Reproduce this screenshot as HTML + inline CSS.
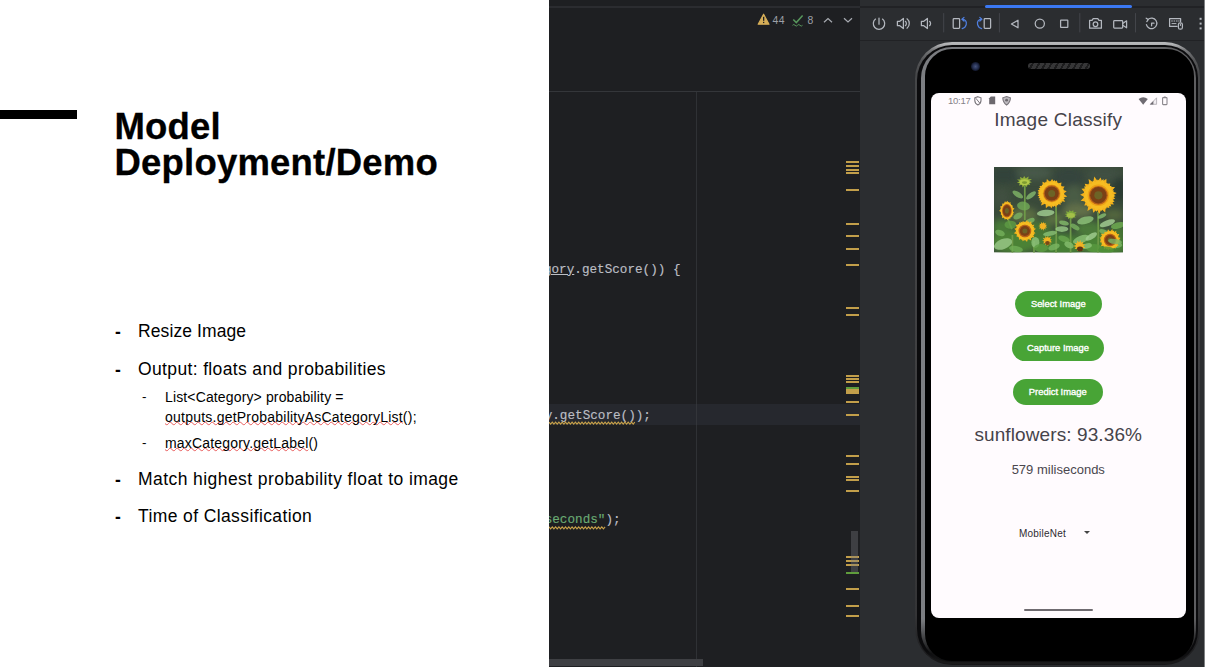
<!DOCTYPE html>
<html lang="en">
<head>
<meta charset="utf-8">
<title>Model Deployment/Demo</title>
<style>
*{box-sizing:border-box;margin:0;padding:0}
html,body{width:1205px;height:667px;overflow:hidden;background:#fff}
body{position:relative;font-family:"Liberation Sans",sans-serif;color:#000}
.abs{position:absolute}
/* ---------- slide (left) ---------- */
#bar{left:0;top:110px;width:77px;height:9px;background:#000}
#title{left:114.5px;top:108.5px;font-weight:bold;font-size:36.5px;line-height:36px;letter-spacing:.2px;white-space:nowrap;-webkit-text-stroke:.3px #000}
.b1{font-size:17.5px;line-height:20px;white-space:nowrap;letter-spacing:.3px}
.b2{font-size:14px;line-height:20px;white-space:nowrap;letter-spacing:.18px}
.dash1{font-size:17.5px;line-height:20px;font-weight:bold}
.dash2{font-size:13.5px;line-height:20px}
.sp{text-decoration:underline wavy #e85c5c;text-decoration-thickness:.7px;text-underline-offset:-1px;text-decoration-skip-ink:none}
/* ---------- IDE (right) ---------- */
#ide{left:549px;top:0;width:656px;height:667px;background:#1e1f22;overflow:hidden}
#ide .abs{position:absolute}
.code{font-family:"Liberation Mono",monospace;font-size:12.65px;line-height:21px;color:#bcbec4;white-space:pre;-webkit-text-stroke:.15px currentColor}
.mk{left:297px;width:13px;height:2px;background:#c29e4a}
.mkg{left:297px;width:13px;height:2px;background:#5f9c3c}
.sepv{width:1px;height:19px;top:13px;background:#43454a}
/* phone */
#phone{left:366.2px;top:42.0px;width:284.8px;height:623.0px;border-radius:37px 35px 35px 37px;background:linear-gradient(180deg,#babbbd 0,#b0b1b3 2.5px,#77787a 8px,#555658 18px,#454648 34px,#404042 50%,#343436 92%,#161618 100%)}
#ph2{left:367.9px;top:44.9px;width:280.8px;height:619.1px;border-radius:35px 33px 33px 35px;background:linear-gradient(180deg,#0b0b0d 0,#0b0b0d 98%,#1c1c1c 100%)}
#ph3{left:371.6px;top:47.0px;width:275.5px;height:614.8px;border-radius:31px 31px 31px 31px;background:linear-gradient(180deg,rgba(8,8,9,0) 0,rgba(8,8,9,0) 93%,rgba(8,8,9,.92) 98.6%),linear-gradient(90deg,#7c7e82 0,#7a7c80 6%,#6a6b6e 50%,#5e5e60 100%)}
#phblack{left:375.5px;top:49.1px;width:269.4px;height:612.3px;border-radius:27px;background:#000}
#screen{left:382px;top:93px;width:254.5px;height:524.6px;border-radius:8px;background:#fffbfe;overflow:hidden;color:#49454f}
#screen .abs{position:absolute}
.ctr{left:0;width:254.5px;text-align:center;white-space:nowrap}
.btn{background:#48a436;border-radius:13px;height:26px;color:#fff;font-size:9.4px;line-height:26px;text-align:center;-webkit-text-stroke:.35px #fff;white-space:nowrap}
</style>
</head>
<body>

<!-- ================= SLIDE ================= -->
<div class="abs" id="bar"></div>
<div class="abs" id="title">Model<br>Deployment/Demo</div>

<div class="abs dash1" style="left:115px;top:322px">-</div>
<div class="abs b1" style="left:138px;top:321px;letter-spacing:.1px">Resize Image</div>

<div class="abs dash1" style="left:115px;top:360px">-</div>
<div class="abs b1" style="left:138px;top:359px;letter-spacing:.36px">Output: floats and probabilities</div>

<div class="abs dash2" style="left:142px;top:386.8px">-</div>
<div class="abs b2" style="left:165px;top:386.8px;letter-spacing:.14px">List&lt;Category&gt; probability =</div>
<div class="abs b2" style="left:165px;top:406.8px;letter-spacing:.23px"><span class="sp">outputs.getProbabilityAsCategoryList</span>();</div>

<div class="abs dash2" style="left:142px;top:432.8px">-</div>
<div class="abs b2" style="left:165px;top:432.8px"><span class="sp">maxCategory.getLabel</span>()</div>

<div class="abs dash1" style="left:115px;top:470px">-</div>
<div class="abs b1" style="left:138px;top:469px;letter-spacing:.43px">Match highest probability float to image</div>

<div class="abs dash1" style="left:115px;top:507px">-</div>
<div class="abs b1" style="left:138px;top:505.5px;letter-spacing:.39px">Time of Classification</div>

<!-- ================= IDE SCREENSHOT ================= -->
<div class="abs" id="ide">
  <!-- editor chrome -->
  <div class="abs" style="left:0;top:6.3px;width:311px;height:1.6px;background:#2b2c30"></div>
  <div class="abs" style="left:0;top:91px;width:311px;height:1px;background:#34363a"></div>
  <div class="abs" style="left:147px;top:92px;width:1px;height:575px;background:#2f3135"></div>
  <!-- current line -->
  <div class="abs" style="left:0;top:404px;width:311px;height:21px;background:#26282e"></div>
  <div class="abs" style="left:147px;top:404px;width:1px;height:21px;background:#33353a"></div>

  <!-- code -->
  <div class="abs code" style="left:-5.06px;top:258.8px"><u>gory</u>.getScore()) {</div>
  <div class="abs code" style="left:-4.3px;top:405.1px">y.getScore());</div>
  <div class="abs code" style="left:-4.3px;top:509.4px"><span style="color:#6aab73">seconds"</span>);</div>

  <!-- warning squiggles -->
  <svg class="abs" style="left:0;top:0" width="160" height="667" viewBox="0 0 160 667" fill="none" stroke="#c9a24a" stroke-width="1.1"><polyline points="0.0,422.2 1.6,424.2 3.3,422.2 4.9,424.2 6.6,422.2 8.2,424.2 9.9,422.2 11.6,424.2 13.2,422.2 14.9,424.2 16.5,422.2 18.1,424.2 19.8,422.2 21.4,424.2 23.1,422.2 24.7,424.2 26.4,422.2 28.0,424.2 29.7,422.2 31.3,424.2 33.0,422.2 34.6,424.2 36.3,422.2 37.9,424.2 39.6,422.2 41.2,424.2 42.9,422.2 44.5,424.2 46.2,422.2 47.8,424.2 49.5,422.2 51.1,424.2 52.8,422.2 54.4,424.2 56.1,422.2 57.7,424.2 59.4,422.2 61.0,424.2 62.7,422.2 64.3,424.2 66.0,422.2 67.6,424.2 69.3,422.2 70.9,424.2 72.6,422.2 74.2,424.2 75.9,422.2 77.6,424.2 79.2,422.2 80.9,424.2 82.5,422.2 84.2,424.2 85.8,422.2"/><polyline points="0.0,526.8 1.6,528.8 3.3,526.8 4.9,528.8 6.6,526.8 8.2,528.8 9.9,526.8 11.6,528.8 13.2,526.8 14.9,528.8 16.5,526.8 18.1,528.8 19.8,526.8 21.4,528.8 23.1,526.8 24.7,528.8 26.4,526.8 28.0,528.8 29.7,526.8 31.3,528.8 33.0,526.8 34.6,528.8 36.3,526.8 37.9,528.8 39.6,526.8 41.2,528.8 42.9,526.8 44.5,528.8 46.2,526.8 47.8,528.8 49.5,526.8 51.1,528.8 52.8,526.8 54.4,528.8 56.1,526.8"/></svg>
  <!-- error stripe -->
  <div class="abs mk" style="top:160.9px"></div><div class="abs mk" style="top:164.7px"></div><div class="abs mk" style="top:168.5px"></div><div class="abs mk" style="top:172.2px"></div><div class="abs mk" style="top:188.5px"></div><div class="abs mk" style="top:222.5px"></div><div class="abs mk" style="top:234.9px"></div><div class="abs mk" style="top:248.2px"></div><div class="abs mk" style="top:264.4px"></div><div class="abs mk" style="top:307.1px"></div><div class="abs mk" style="top:313.9px"></div><div class="abs mk" style="top:374.7px"></div><div class="abs mk" style="top:377.8px"></div><div class="abs mk" style="top:380.8px"></div><div class="abs mk" style="top:400.9px"></div><div class="abs mk" style="top:414.1px"></div><div class="abs mk" style="top:454.7px"></div><div class="abs mk" style="top:463.1px"></div><div class="abs mk" style="top:475.6px"></div><div class="abs mk" style="top:479.4px"></div><div class="abs mk" style="top:489.9px"></div><div class="abs mk" style="top:556.3px"></div><div class="abs mk" style="top:560.0px"></div><div class="abs mk" style="top:563.8px"></div><div class="abs mk" style="top:587.5px"></div><div class="abs mk" style="top:604.5px"></div><div class="abs mk" style="top:614.8px"></div><div class="abs mk" style="top:387px;height:6.5px"></div><div class="abs mkg" style="top:387px;height:1.6px"></div><div class="abs" style="left:301.5px;top:530.5px;width:7.5px;height:42px;background:rgba(120,122,128,.36)"></div><div class="abs mkg" style="top:572.3px"></div>

  <!-- inspections widget -->
  <svg class="abs" style="left:208px;top:13px" width="100" height="14" viewBox="0 0 100 14">
    <path d="M6.6 1.2 L12 11.2 H1.2 Z" fill="#d6ae58" stroke="#d6ae58" stroke-width="1.2" stroke-linejoin="round"/>
    <rect x="6" y="3.8" width="1.3" height="4" fill="#1e1f22"/><rect x="6" y="8.8" width="1.3" height="1.3" fill="#1e1f22"/>
    <text x="15.6" y="11" font-family="Liberation Sans,sans-serif" font-size="10.4" fill="#9da0a8" letter-spacing=".5">44</text>
    <path d="M36.3 6.5 L39.3 9.6 L45.6 2.4" fill="none" stroke="#57965c" stroke-width="1.5"/>
    <path d="M35.5 12.3 q1.25 -1.6 2.5 0 t2.5 0 t2.5 0 t2.5 0" fill="none" stroke="#57965c" stroke-width="1"/>
    <text x="50.6" y="11" font-family="Liberation Sans,sans-serif" font-size="10.4" fill="#9da0a8">8</text>
    <path d="M67 9.3 L71 5.5 L75 9.3" fill="none" stroke="#a8abb2" stroke-width="1.2"/>
    <path d="M87 5.2 L91 9 L95 5.2" fill="none" stroke="#a8abb2" stroke-width="1.2"/>
  </svg>

  <!-- ============ emulator tool window ============ -->
  <div class="abs" id="emu" style="left:311px;top:0;width:345px;height:667px;background:#2b2d30"></div>
  <div class="abs" style="left:311px;top:6.3px;width:345px;height:1.5px;background:#212225"></div>
  <div class="abs" style="left:311px;top:39.5px;width:345px;height:1.4px;background:#212225"></div>
  <div class="abs" style="left:436px;top:4.5px;width:146.5px;height:3.2px;background:#3b78f2;border-radius:1.5px"></div>

  <!-- toolbar icons (ide-relative coords: page x - 549) -->
  <svg class="abs" style="left:311px;top:8px" width="344" height="32" viewBox="860 8 344 32" fill="none" stroke="#b4b8bf" stroke-width="1.25" stroke-linecap="round" stroke-linejoin="round">
    <!-- power -->
    <path d="M875.5 19.1 A5.7 5.7 0 1 0 882.5 19.1"/><path d="M879 18 V24.2"/>
    <!-- volume up -->
    <path d="M897.4 21.3 H899.8 L903.4 18.4 V28.6 L899.8 25.7 H897.4 Z"/>
    <path d="M905.4 21.3 A3 3 0 0 1 905.4 25.7"/><path d="M907 18.8 A6 6 0 0 1 907 28.2"/>
    <!-- volume down -->
    <path d="M921.4 21.3 H923.8 L927.4 18.4 V28.6 L923.8 25.7 H921.4 Z"/>
    <path d="M929.6 21.3 A3 3 0 0 1 929.6 25.7"/>
    <!-- sep -->
    <path d="M943.7 13.5 V32" stroke="#43454a" stroke-width="1"/>
    <!-- rotate left -->
    <rect x="953.2" y="18.6" width="6.4" height="9.8" rx=".8"/>
    <path d="M962.2 19.2 Q967.2 19.8 966.2 24.6 Q965.4 27.8 962.2 28.6" stroke="#4f7fe0"/>
    <path d="M964 17.4 L962 19.2 L964 21" stroke="#4f7fe0"/>
    <!-- rotate right -->
    <rect x="984.2" y="18.6" width="6.4" height="9.8" rx=".8"/>
    <path d="M981.6 19.2 Q976.6 19.8 977.6 24.6 Q978.4 27.8 981.6 28.6" stroke="#4f7fe0"/>
    <path d="M979.8 17.4 L981.8 19.2 L979.8 21" stroke="#4f7fe0"/>
    <!-- sep -->
    <path d="M999.4 13.5 V32" stroke="#43454a" stroke-width="1"/>
    <!-- back / home / overview -->
    <path d="M1018 20.2 V27.8 L1011.4 24 Z"/>
    <circle cx="1039.8" cy="23.6" r="4.6"/>
    <rect x="1060.6" y="20.2" width="7.2" height="7.2" rx=".4"/>
    <!-- sep -->
    <path d="M1079.8 13.5 V32" stroke="#43454a" stroke-width="1"/>
    <!-- camera -->
    <path d="M1089.6 20.4 H1092 L1093.2 18.6 H1097.8 L1099 20.4 H1101.4 V28.2 H1089.6 Z"/>
    <circle cx="1095.5" cy="24.2" r="2.3"/>
    <!-- video -->
    <rect x="1113.7" y="20.6" width="9" height="7.4" rx=".8"/>
    <path d="M1122.7 23.4 L1126.6 20.8 V27.8 L1122.7 25.2"/>
    <!-- sep -->
    <path d="M1135.5 13.5 V32" stroke="#43454a" stroke-width="1"/>
    <!-- snapshot / history -->
    <path d="M1148 19.4 A5.3 5.3 0 1 1 1146.4 24.6"/>
    <path d="M1146.2 18.2 L1148.2 19.6 L1146.8 21.6"/>
    <path d="M1151.6 25.8 V23.2 H1154"/>
    <!-- keyboard + mouse -->
    <path d="M1177 26.4 H1169.6 V18.6 H1180.6 V21.6"/>
    <path d="M1171.6 21 H1172.4 M1174 21 H1174.8 M1176.4 21 H1177.2 M1178.6 21 H1179.2 M1172 23.6 H1176" stroke-width="1"/>
    <rect x="1178.4" y="22.8" width="4" height="6.4" rx="1.8" fill="#2b2d30"/>
    <path d="M1180.4 24.2 V25.6" stroke-width="1"/>
    <!-- more -->
    <g fill="#b4b8bf" stroke="none"><rect x="1199.6" y="17.8" width="2" height="2"/><rect x="1199.6" y="22.6" width="2" height="2"/><rect x="1199.6" y="27.4" width="2" height="2"/></g>
  </svg>

  <!-- phone -->
  <div class="abs" id="phone"></div><div class="abs" id="ph2"></div><div class="abs" id="ph3"></div>
  <div class="abs" id="phblack"></div>
  <!-- camera + earpiece -->
  <div class="abs" style="left:422px;top:61.5px;width:9px;height:9px;border-radius:50%;background:radial-gradient(circle,#46527a 0,#2a3558 35%,#141a30 65%,#05060a 100%)"></div>
  <div class="abs" style="left:479px;top:62.6px;width:62px;height:6.4px;border-radius:3.2px;background:repeating-linear-gradient(120deg,#363637 0 3.4px,#1c1c1d 3.4px 5.4px)"></div>

  <div class="abs" id="screen">
    <!-- status bar (screen-relative: page x - 931, page y - 93) -->
    <div class="abs" style="left:17px;top:1.5px;font-size:9.5px;line-height:12px;color:#858288;letter-spacing:-.25px">10:17</div>
    <svg class="abs" style="left:42px;top:3px" width="40" height="10" viewBox="0 0 40 10" fill="#6c686e">
      <path d="M4.9 .7 L8 1.8 V4.6 Q8 7.6 4.9 9 Q1.8 7.6 1.8 4.6 V1.8 Z" fill="none" stroke="#7a767c" stroke-width="1.1"/>
      <path d="M2.8 2.2 L6.8 7.2" stroke="#7a767c" stroke-width="1"/>
      <path d="M17.8 .4 H22.2 V8.3 H16.2 V2.2 Z"/>
      <path d="M33.6 .6 L37.4 1.8 Q37.4 6.4 33.6 9 Q29.8 6.4 29.8 1.8 Z" fill="#bdb9bf" stroke="#7a767c" stroke-width="1.1"/>
      <circle cx="33.6" cy="4.2" r="1.4"/>
    </svg>
    <svg class="abs" style="left:207px;top:2.5px" width="32" height="10" viewBox="0 0 32 10" fill="#6f6b72">
      <path d="M0.6 3 Q5.2 -.6 9.8 3 L5.2 8.8 Z"/>
      <path d="M18.6 1.8 V8.3 H12.4 Z" fill="#f1edf1" stroke="#aaa6ac" stroke-width=".8"/><path d="M15.4 5 V8.6 H11.8 Z"/>
      <rect x="24.6" y="1.6" width="4.4" height="7" rx=".6" fill="none" stroke="#8b878d" stroke-width="1.1"/><rect x="25.8" y=".5" width="2" height="1.2" fill="#8b878d"/>
    </svg>

    <div class="abs ctr" style="top:15px;font-size:19px;line-height:24px;letter-spacing:.25px;color:#46434a">Image Classify</div>

    <!-- sunflower picture placeholder: replaced below -->
    <!--PIC--><svg class="abs" id="pic" style="left:62.5px;top:74px" width="129.5" height="85.5" viewBox="0 0 129.5 85.5" aria-label="sunflowers">
<defs><filter id="bl" x="-20%" y="-20%" width="140%" height="140%"><feGaussianBlur stdDeviation="3.2"/></filter><filter id="b1" x="-10%" y="-10%" width="120%" height="120%"><feGaussianBlur stdDeviation=".5"/></filter><clipPath id="pc"><rect width="129.5" height="85.5"/></clipPath></defs>
<g clip-path="url(#pc)">
<rect width="129.5" height="85.5" fill="#3a4a3a"/>
<g filter="url(#bl)">
<ellipse cx="10" cy="8" rx="16" ry="8" fill="#33433a"/>
<ellipse cx="40" cy="6" rx="18" ry="7" fill="#47584a"/>
<ellipse cx="75" cy="10" rx="16" ry="9" fill="#34443c"/>
<ellipse cx="110" cy="8" rx="18" ry="8" fill="#3f5042"/>
<ellipse cx="126" cy="22" rx="8" ry="12" fill="#2c3a30"/>
<ellipse cx="80" cy="30" rx="10" ry="12" fill="#4a5b44"/>
<ellipse cx="30" cy="48" rx="14" ry="8" fill="#5a6c42"/>
<ellipse cx="84" cy="44" rx="16" ry="7" fill="#62704a"/>
<ellipse cx="120" cy="48" rx="10" ry="6" fill="#52663e"/>
<ellipse cx="60" cy="52" rx="10" ry="6" fill="#5a6e42"/>
<ellipse cx="8" cy="30" rx="8" ry="10" fill="#3f5040"/>
<ellipse cx="20" cy="75" rx="24" ry="12" fill="#4b8236"/>
<ellipse cx="65" cy="78" rx="26" ry="12" fill="#478034"/>
<ellipse cx="110" cy="78" rx="24" ry="12" fill="#4a8336"/>
<ellipse cx="45" cy="62" rx="12" ry="8" fill="#477636"/>
<ellipse cx="95" cy="62" rx="14" ry="8" fill="#4c7a3a"/>
<ellipse cx="8" cy="60" rx="10" ry="8" fill="#4a7a38"/>
<ellipse cx="125" cy="66" rx="8" ry="8" fill="#467636"/>
</g>
<g filter="url(#b1)">
<path d="M30.8 19 V53" stroke="#6e9a48" stroke-width="1.7" fill="none"/>
<path d="M62 40 Q62.6 60 62 86" stroke="#6e9a48" stroke-width="1.7" fill="none"/>
<path d="M76.6 51 V86" stroke="#6e9a48" stroke-width="1.7" fill="none"/>
<path d="M104 45 Q104.6 65 104 86" stroke="#6e9a48" stroke-width="1.7" fill="none"/>
<path d="M18.4 68 V86" stroke="#6e9a48" stroke-width="1.7" fill="none"/>
<path d="M40 74 V86" stroke="#6e9a48" stroke-width="1.7" fill="none"/>
<path d="M14 52 Q16 58 18 62" stroke="#6e9a48" stroke-width="1.7" fill="none"/>
<ellipse cx="51.7" cy="46" rx="8.8" ry="3.2" fill="#a3cf92" opacity=".8" transform="rotate(-5 51.7 46)"/>
<ellipse cx="23.8" cy="27.5" rx="6" ry="2.6" fill="#7fb567" opacity=".8" transform="rotate(32 23.8 27.5)"/>
<ellipse cx="37" cy="28.4" rx="6" ry="2.4" fill="#86ba6e" opacity=".8" transform="rotate(-38 37 28.4)"/>
<ellipse cx="29.5" cy="39" rx="6.5" ry="4.4" fill="#6fa955" opacity=".8" transform="rotate(10 29.5 39)"/>
<ellipse cx="91.4" cy="53.3" rx="8.5" ry="3.6" fill="#8ec47a" opacity=".8" transform="rotate(-15 91.4 53.3)"/>
<ellipse cx="113.4" cy="56.3" rx="8" ry="3" fill="#a6d296" opacity=".8" transform="rotate(-20 113.4 56.3)"/>
<ellipse cx="123.7" cy="58.5" rx="7" ry="3.2" fill="#6fae52" opacity=".8" transform="rotate(-15 123.7 58.5)"/>
<ellipse cx="9.1" cy="77" rx="9.5" ry="5" fill="#9ccb8b" opacity=".8" transform="rotate(-22 9.1 77)"/>
<ellipse cx="16.5" cy="57.7" rx="6" ry="4" fill="#5f9c44" opacity=".8" transform="rotate(0 16.5 57.7)"/>
<ellipse cx="87" cy="72.4" rx="8.5" ry="3.8" fill="#8cc377" opacity=".8" transform="rotate(-22 87 72.4)"/>
<ellipse cx="119.3" cy="77.5" rx="9" ry="3.5" fill="#7db565" opacity=".8" transform="rotate(5 119.3 77.5)"/>
<ellipse cx="41.4" cy="75.4" rx="4" ry="5.5" fill="#8fc47c" opacity=".8" transform="rotate(0 41.4 75.4)"/>
<ellipse cx="67.9" cy="62.1" rx="6.5" ry="2.8" fill="#9acb88" opacity=".8" transform="rotate(0 67.9 62.1)"/>
<ellipse cx="97.3" cy="69.5" rx="6.5" ry="2.8" fill="#a2cf92" opacity=".8" transform="rotate(-32 97.3 69.5)"/>
<ellipse cx="56" cy="66.5" rx="7" ry="2.4" fill="#8abf74" opacity=".8" transform="rotate(-10 56 66.5)"/>
<ellipse cx="70" cy="72" rx="6" ry="3" fill="#6aa650" opacity=".8" transform="rotate(20 70 72)"/>
<ellipse cx="47" cy="81" rx="7" ry="4" fill="#5c9c42" opacity=".8" transform="rotate(0 47 81)"/>
<ellipse cx="100" cy="81" rx="8" ry="4" fill="#58983e" opacity=".8" transform="rotate(0 100 81)"/>
<ellipse cx="60" cy="80" rx="6" ry="3" fill="#7ab562" opacity=".8" transform="rotate(-20 60 80)"/>
<ellipse cx="75" cy="78" rx="5" ry="3" fill="#86be6e" opacity=".8" transform="rotate(25 75 78)"/>
<ellipse cx="22" cy="82" rx="7" ry="3" fill="#6fae55" opacity=".8" transform="rotate(10 22 82)"/>
<ellipse cx="93" cy="79" rx="5" ry="2.6" fill="#8cc476" opacity=".8" transform="rotate(-15 93 79)"/>
<ellipse cx="110" cy="65" rx="5" ry="2.4" fill="#7cb663" opacity=".8" transform="rotate(20 110 65)"/>
<ellipse cx="36" cy="54" rx="5" ry="2.4" fill="#7db765" opacity=".8" transform="rotate(-25 36 54)"/>
<ellipse cx="70" cy="56" rx="5" ry="2.2" fill="#84bc6c" opacity=".8" transform="rotate(15 70 56)"/>
<ellipse cx="6" cy="66" rx="5" ry="3" fill="#74b05a" opacity=".8" transform="rotate(20 6 66)"/>
<ellipse cx="24" cy="49" rx="5" ry="3" fill="#7ab262" opacity=".8" transform="rotate(-30 24 49)"/>
<ellipse cx="81" cy="60" rx="5" ry="2.4" fill="#79b260" opacity=".8" transform="rotate(30 81 60)"/>
<ellipse cx="108" cy="49" rx="4.5" ry="2" fill="#86bd6f" opacity=".8" transform="rotate(-25 108 49)"/>
<polygon points="53.2,60.4 51.2,60.6 51.7,62.4 50.0,61.6 49.5,63.8 48.5,61.8 47.1,63.0 47.1,61.2 45.0,61.5 46.2,59.8 44.4,59.0 46.3,58.3 45.3,56.7 47.1,57.0 47.0,54.9 48.5,56.4 49.6,54.9 50.1,56.6 51.9,55.7 51.2,57.6 53.0,58.0 51.7,59.1" fill="#f1b324"/>
<polygon points="57.9,75.2 55.9,75.5 56.6,77.7 54.6,76.7 54.0,79.2 52.8,76.9 51.2,78.2 51.2,76.1 49.1,76.4 50.3,74.6 48.0,73.7 50.3,72.9 48.7,70.7 51.3,71.4 51.2,69.0 52.9,70.7 54.1,68.7 54.6,71.0 57.0,69.6 55.9,72.2 57.9,72.5 56.4,73.8" fill="#f1b324"/>
<polygon points="91.6,80.9 88.5,81.0 89.2,83.4 86.9,82.3 86.2,84.6 84.9,82.6 83.1,84.1 83.1,81.7 80.6,82.1 82.0,80.0 79.2,78.9 82.1,77.9 80.8,75.9 83.2,76.2 83.1,73.4 85.0,75.4 86.5,72.9 87.0,75.7 89.4,74.6 88.6,77.1 91.3,77.4 89.1,79.1" fill="#f1b324"/>
<ellipse cx="86" cy="82" rx="3" ry="2.4" fill="#5c3313"/>
<ellipse cx="53.5" cy="76" rx="2.4" ry="2" fill="#7a4a18"/>
<polygon points="37.9,15.2 35.1,16.1 36.3,18.0 33.4,17.6 33.0,19.9 30.7,18.3 28.5,20.5 28.0,17.8 24.8,18.6 26.0,16.3 22.9,15.7 25.5,14.3 23.0,12.5 26.6,12.5 25.9,10.0 28.9,11.3 30.2,9.1 31.7,11.2 34.7,9.5 34.1,12.2 37.9,12.0 35.4,14.0" fill="#8fae3a"/>
<ellipse cx="30.5" cy="15.2" rx="5" ry="3" fill="#b3c94a"/>
<ellipse cx="30.5" cy="15.6" rx="2.6" ry="1.4" fill="#7d9a30"/>
<polygon points="82.9,48.1 80.5,48.8 81.6,50.8 78.8,50.2 78.2,52.3 76.4,50.6 74.1,52.3 74.1,49.8 71.1,50.1 72.9,48.2 70.6,47.1 73.1,46.4 71.7,44.2 74.8,45.0 75.5,43.2 77.2,44.6 79.3,43.3 79.5,45.4 82.6,45.1 80.7,47.0" fill="#7faa3c"/>
<ellipse cx="76.8" cy="48.4" rx="4" ry="2.4" fill="#a4c04a"/>
<polygon points="121.1,31.7 117.5,33.3 119.9,37.4 115.2,37.3 115.3,41.0 111.7,40.3 111.2,45.5 107.4,42.0 105.3,47.0 102.8,42.2 99.3,45.8 98.3,41.0 93.4,43.9 94.5,38.3 90.3,38.5 91.8,34.6 86.6,33.7 90.5,30.1 86.1,27.7 90.6,25.5 87.4,21.8 92.3,21.2 90.7,16.8 95.3,17.6 94.6,12.1 99.2,15.3 100.3,9.5 103.7,14.3 106.5,10.5 108.3,14.8 112.4,11.7 112.5,16.8 116.2,16.4 115.8,20.1 121.0,20.0 117.8,24.2 122.7,25.9 118.4,28.8" fill="#f3b21c"/>
<polygon points="120.6,34.8 115.8,35.2 117.3,39.4 112.9,38.5 112.3,41.8 109.1,40.7 107.5,43.9 104.8,41.6 102.2,44.8 100.5,41.0 97.7,41.7 96.6,39.1 92.9,39.6 93.5,36.0 90.6,34.9 91.6,32.0 89.3,30.1 91.1,27.6 89.7,25.1 92.0,23.4 90.0,19.5 94.3,19.6 94.6,16.6 97.7,16.8 98.9,13.8 101.8,15.2 103.9,12.4 106.2,15.1 109.4,11.9 110.3,16.4 113.3,16.1 113.9,19.0 117.6,19.1 116.4,22.5 120.1,23.8 117.6,26.8 121.6,29.1 117.4,31.1" fill="#f6bd24"/>
<ellipse cx="104.4" cy="28.3" rx="10.8" ry="10.8" fill="#eda416"/>
<ellipse cx="104.4" cy="28.3" rx="9.4" ry="9.4" fill="#b8611a"/>
<ellipse cx="104.4" cy="28.3" rx="8.2" ry="8.2" fill="#7a3f16"/>
<ellipse cx="104.4" cy="28.3" rx="4.1" ry="4.1" fill="#6d6426"/>
<polygon points="73.2,29.6 68.6,30.8 71.2,34.8 66.5,34.2 66.7,37.8 63.3,36.8 62.4,40.5 59.4,38.1 57.3,41.2 55.4,38.0 51.9,41.3 51.6,36.5 47.0,38.6 48.5,33.8 45.3,33.3 46.6,30.2 43.6,28.6 46.0,26.2 43.6,23.6 46.8,22.2 45.5,19.0 48.9,18.8 48.4,14.8 52.1,16.2 52.9,12.1 56.0,14.9 58.1,12.1 60.0,15.0 62.8,13.6 63.8,16.5 67.5,15.4 66.9,19.2 70.6,19.5 68.8,22.8 72.7,24.2 69.4,26.8" fill="#f3b21c"/>
<polygon points="71.1,31.9 67.1,32.3 68.1,35.8 64.6,35.2 64.1,38.4 61.2,37.0 59.7,40.1 57.4,37.6 54.9,40.1 53.6,36.8 51.1,37.2 50.3,34.8 46.4,35.4 47.9,31.8 44.3,30.9 46.7,28.1 43.4,26.1 46.8,24.2 44.6,21.3 48.3,20.7 47.8,17.7 50.8,17.8 51.4,14.8 54.2,16.0 55.9,14.0 58.0,15.4 60.5,13.0 61.8,16.2 64.3,15.8 65.1,18.2 67.6,18.7 67.5,21.2 69.9,22.5 68.7,24.9 70.5,26.9 68.6,28.8" fill="#f6bd24"/>
<ellipse cx="57.7" cy="26.5" rx="9.0" ry="9.0" fill="#eda416"/>
<ellipse cx="57.7" cy="26.5" rx="8.2" ry="8.2" fill="#b8611a"/>
<ellipse cx="57.7" cy="26.5" rx="7.0" ry="7.0" fill="#7a3f16"/>
<ellipse cx="57.7" cy="26.5" rx="3.5" ry="3.5" fill="#6d6426"/>
<polygon points="19.9,45.7 18.2,46.9 18.5,49.2 16.8,49.6 16.3,51.8 14.7,51.2 13.7,53.3 12.4,51.6 10.8,52.8 10.1,50.6 8.1,51.2 8.3,48.4 6.7,47.6 7.3,45.4 5.1,43.8 7.3,42.1 6.0,39.6 8.2,39.1 8.2,36.6 10.0,36.8 10.7,34.4 12.2,35.8 13.6,33.8 14.6,36.1 16.4,35.0 16.7,37.7 18.4,38.0 18.1,40.4 20.5,41.4 18.6,43.6" fill="#f3b21c"/>
<polygon points="19.5,47.4 17.4,47.9 17.5,50.2 15.8,50.1 15.2,52.3 13.7,51.2 12.5,52.3 11.4,51.0 10.0,51.3 9.4,49.5 7.8,49.2 8.0,47.0 6.7,45.9 7.5,44.0 6.0,42.1 7.9,40.9 7.7,38.9 9.1,38.3 9.6,36.5 11.0,36.6 11.9,34.0 13.3,36.2 14.7,34.8 15.4,37.0 16.9,37.0 17.2,39.0 18.9,39.6 18.2,41.8 19.0,43.4 18.3,45.0" fill="#f6bd24"/>
<ellipse cx="12.9" cy="43.7" rx="4.4" ry="6.1" fill="#eda416"/>
<ellipse cx="12.9" cy="43.7" rx="4.9" ry="6.8" fill="#b8611a"/>
<ellipse cx="12.9" cy="43.7" rx="4.0" ry="5.6" fill="#7a3f16"/>
<ellipse cx="12.9" cy="43.7" rx="2.0" ry="2.8" fill="#6d6426"/>
<polygon points="41.5,66.2 38.7,67.3 40.5,70.5 36.8,70.0 37.2,73.5 34.1,71.8 33.0,74.9 30.9,72.4 28.8,74.2 27.6,71.8 25.0,72.8 24.9,69.9 22.4,69.6 23.1,67.2 19.8,66.2 22.5,64.0 20.3,61.8 23.1,60.7 21.5,57.7 25.0,58.0 25.1,55.2 27.7,56.2 28.9,53.9 30.9,55.6 33.2,52.9 34.2,56.2 37.4,54.3 36.9,58.1 40.4,57.7 38.7,60.8 42.0,61.8 39.3,64.0" fill="#f3b21c"/>
<polygon points="40.4,67.8 37.6,68.4 38.1,71.0 35.4,70.6 34.6,72.5 32.6,71.8 31.0,73.7 29.4,71.9 27.4,72.8 26.5,70.7 24.6,70.4 24.3,68.5 22.6,67.5 23.1,65.7 21.5,64.1 23.0,62.5 22.2,60.5 24.2,59.6 23.7,57.0 26.4,57.4 26.8,54.4 29.2,56.2 30.8,54.4 32.4,56.1 34.8,54.3 35.3,57.3 38.2,56.5 37.5,59.5 40.5,59.9 38.7,62.3 40.4,63.9 38.8,65.5" fill="#f6bd24"/>
<ellipse cx="30.9" cy="64" rx="6.5" ry="6.5" fill="#eda416"/>
<ellipse cx="30.9" cy="64" rx="6.3" ry="6.3" fill="#b8611a"/>
<ellipse cx="30.9" cy="64" rx="5.1" ry="5.1" fill="#7a3f16"/>
<ellipse cx="30.9" cy="64" rx="2.5" ry="2.5" fill="#6d6426"/>
<polygon points="126.0,75.0 123.7,76.2 124.5,78.7 121.9,78.9 121.7,81.4 119.2,80.7 118.0,82.9 116.1,81.3 114.0,83.6 112.9,80.6 109.8,82.4 110.2,78.8 106.8,79.2 108.4,76.1 105.7,75.0 107.8,73.0 105.5,70.8 108.5,69.8 106.9,66.8 110.3,67.1 110.6,64.8 113.0,65.3 114.0,62.3 116.1,64.7 118.3,61.9 119.3,65.4 122.3,63.8 122.0,67.2 125.3,66.9 123.8,69.9 126.5,71.0 124.4,73.0" fill="#f3b21c"/>
<polygon points="124.5,76.4 122.7,77.3 123.2,80.0 120.5,79.5 119.8,81.5 117.7,80.7 116.2,83.0 114.7,80.7 112.3,82.5 111.8,79.6 109.6,79.7 109.6,77.4 107.5,76.7 108.4,74.6 105.9,73.1 108.4,71.6 106.9,69.3 109.5,68.7 109.6,66.7 111.7,66.5 112.6,64.8 114.5,65.3 116.0,64.0 117.5,65.3 119.9,63.6 120.4,66.4 123.1,65.8 122.6,68.6 124.4,69.5 123.8,71.4 126.1,72.9 123.8,74.4" fill="#f6bd24"/>
<ellipse cx="116.1" cy="73" rx="6.4" ry="6.4" fill="#eda416"/>
<ellipse cx="116.1" cy="73" rx="6.2" ry="6.2" fill="#b8611a"/>
<ellipse cx="116.1" cy="73" rx="5.0" ry="5.0" fill="#7a3f16"/>
<ellipse cx="116.1" cy="73" rx="2.5" ry="2.5" fill="#6d6426"/>
<ellipse cx="121" cy="74.5" rx="7" ry="2.6" fill="#7db565" opacity=".8" transform="rotate(8 121 74.5)"/>
<ellipse cx="112" cy="83" rx="8" ry="3.5" fill="#4f9038" opacity=".8" transform="rotate(0 112 83)"/>
</g></g></svg><!--/PIC-->

    <div class="abs btn" style="left:84px;top:198px;width:86.5px">Select Image</div>
    <div class="abs btn" style="left:81px;top:242px;width:92px">Capture Image</div>
    <div class="abs btn" style="left:82px;top:286px;width:89.5px">Predict Image</div>

    <div class="abs ctr" style="top:330px;font-size:19px;line-height:24px;letter-spacing:.1px;color:#46434a">sunflowers: 93.36%</div>
    <div class="abs ctr" style="top:368.6px;font-size:13px;line-height:16px;color:#4a474e">579 miliseconds</div>

    <div class="abs" style="left:88px;top:433.8px;font-size:10px;line-height:14px;letter-spacing:.22px;color:#2e2b31">MobileNet</div>
    <div class="abs" style="left:153px;top:438px;width:0;height:0;border-left:3px solid transparent;border-right:3px solid transparent;border-top:3px solid #444"></div>

    <div class="abs" style="left:93px;top:516px;width:68.5px;height:2px;background:#6f6b70;border-radius:1px"></div>
  </div>

  <!-- right window edge -->
  <div class="abs" style="left:654.8px;top:0;width:2px;height:667px;background:#7f8183"></div>

  <!-- bottom h-scrollbar -->
  <div class="abs" style="left:0;top:658.6px;width:154.3px;height:7.6px;background:#3e3f43"></div>
</div>

</body>
</html>
